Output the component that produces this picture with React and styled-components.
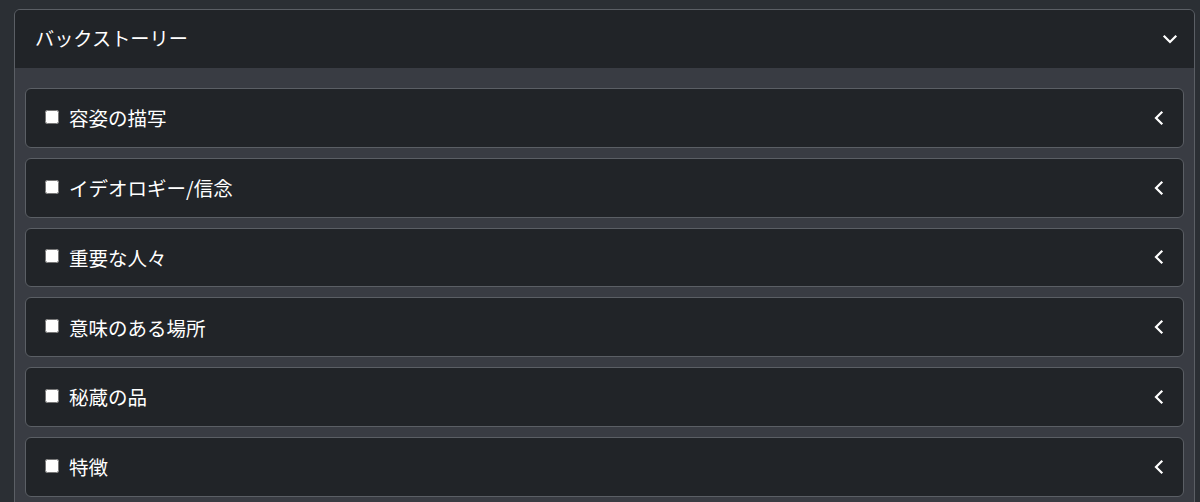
import React from 'react';
import { styled, createGlobalStyle } from 'styled-components';

const items = ['容姿の描写', 'イデオロギー/信念', '重要な人々', '意味のある場所', '秘蔵の品', '特徴'];

function App() {
    return (
        <>
            <GlobalStyle />
            <Page>
                <Card>
                    <CardHeader>
                        <HeaderTitle>バックストーリー</HeaderTitle>
                        <Chevron width="16" height="16" viewBox="0 0 16 16">
                            <path d="M2.5 5.5 L8 11 L13.5 5.5" />
                        </Chevron>
                    </CardHeader>
                    <CardBody>
                        {items.map((label) => (
                            <Item key={label}>
                                <ItemLabel>
                                    <Check type="checkbox" />
                                    <ItemText>{label}</ItemText>
                                </ItemLabel>
                                <Chevron width="16" height="16" viewBox="0 0 16 16">
                                    <path d="M10.5 2.5 L5 8 L10.5 13.5" />
                                </Chevron>
                            </Item>
                        ))}
                    </CardBody>
                </Card>
            </Page>
        </>
    );
}

const GlobalStyle = createGlobalStyle`
    html, body {
        margin: 0;
        padding: 0;
        background-color: #2b2f34;
        overflow: hidden;
    }
    body {
        font-family: "Noto Sans CJK JP", "Noto Sans", sans-serif;
        color: #ffffff;
    }
`;

const Page = styled.div`
    padding: 9px 5px 0 14px;
    height: 502px;
    box-sizing: border-box;
`;

const Card = styled.div`
    border: 1px solid #5b5f65;
    border-radius: 6px;
    overflow: hidden;
    background-color: #393c43;
`;

const CardHeader = styled.div`
    height: 58px;
    background-color: #212428;
    display: flex;
    align-items: center;
    justify-content: space-between;
    padding: 0 16px 0 20px;
`;

const HeaderTitle = styled.span`
    font-size: 19.2px;
    line-height: 1;
`;

const CardBody = styled.div`
    display: flex;
    flex-direction: column;
    gap: 10px;
    padding: 20px 10px 20px 10px;
`;

const Item = styled.div`
    height: 57.8px;
    background-color: #212428;
    border: 1px solid #5b5f65;
    border-radius: 6px;
    display: flex;
    align-items: center;
    justify-content: space-between;
    padding: 0 16px 0 19px;
`;

const ItemLabel = styled.label`
    display: flex;
    align-items: center;
    gap: 10px;
`;

const Check = styled.input`
    width: 14px;
    height: 14px;
    margin: 0 0 2px 0;
    accent-color: #ffffff;
`;

const ItemText = styled.span`
    font-size: 19.5px;
    line-height: 1;
`;

const Chevron = styled.svg`
    fill: none;
    stroke: #ffffff;
    stroke-width: 2.2;
    stroke-linecap: square;
`;

export default App;
